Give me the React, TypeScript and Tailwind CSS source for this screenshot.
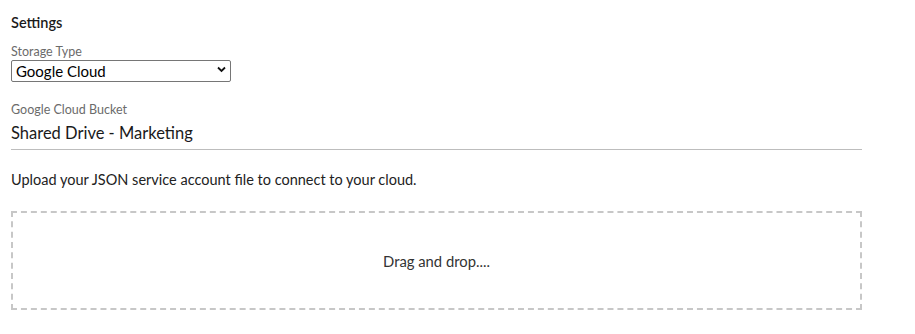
import React from 'react';

const font = { fontFamily: 'Lato, "Noto Sans", sans-serif' };

const App: React.FC = () => {
  return (
    <div className="bg-white min-h-screen pl-[11px] pt-[14px] text-[#222]" style={font}>
      <div className="w-[851px] flex flex-col">
        <h2 className="text-[14.5px] font-semibold leading-[18px] text-[#1a1a1a]">Settings</h2>

        <label className="mt-[13px] text-[12.5px] leading-[14px] text-[#6b6b6b]">Storage Type</label>
        <div className="relative w-[220px] h-[22px] mt-0">
          <select
            defaultValue="gcs"
            className="appearance-none w-full h-full border border-[#767676] rounded-[2px] bg-white pl-[4px] text-[15px] leading-[20px] text-black"
            style={font}
          >
            <option value="gcs">Google Cloud</option>
            <option value="s3">Amazon S3</option>
          </select>
          <svg className="absolute right-[5px] top-[7px] pointer-events-none" width="9" height="7" viewBox="0 0 9 7">
            <path d="M1 1.5 L4.5 5 L8 1.5" fill="none" stroke="#111" strokeWidth="1.8" />
          </svg>
        </div>

        <label className="mt-[22px] text-[12.5px] leading-[14px] text-[#6b6b6b]">Google Cloud Bucket</label>
        <div className="mt-[6px] pb-[6px] border-b border-[#bdbdbd] text-[16.5px] leading-[20px] text-[#1a1a1a]">
          Shared Drive - Marketing
        </div>

        <p className="mt-[21px] text-[14.5px] leading-[18px] text-[#222]">
          Upload your JSON service account file to connect to your cloud.
        </p>

        <div className="mt-[22px] h-[99px] border-2 border-dashed border-[#c7c7c7] flex items-center justify-center">
          <span className="text-[14.8px] text-[#333] pt-[2px]">Drag and drop....</span>
        </div>
      </div>
    </div>
  );
};

export default App;
